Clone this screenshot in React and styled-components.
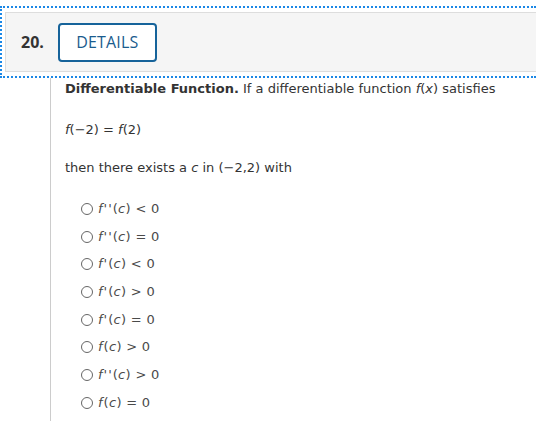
import React from 'react';
import styled, { createGlobalStyle } from 'styled-components';

const GlobalStyle = createGlobalStyle`
  html, body {
    margin: 0;
    padding: 0;
    background: #ffffff;
    overflow: hidden;
  }
  body {
    font-family: "DejaVu Sans", Verdana, sans-serif;
    color: #333333;
  }
`;

const options = [
  { fn: "f''", rel: '<' },
  { fn: "f''", rel: '=' },
  { fn: "f'", rel: '<' },
  { fn: "f'", rel: '>' },
  { fn: "f'", rel: '=' },
  { fn: 'f', rel: '>' },
  { fn: "f''", rel: '>' },
  { fn: 'f', rel: '=' },
];

export default function App() {
  return (
    <Page>
      <GlobalStyle />
      <FocusRing>
        <Header>
          <Number>20.</Number>
          <DetailsButton>DETAILS</DetailsButton>
        </Header>
      </FocusRing>
      <Body>
        <Para>
          <strong>Differentiable Function.</strong> If a differentiable function <i>f</i>(<i>x</i>) satisfies
        </Para>
        <Para $gap={23}>
          <i>f</i>(−2) = <i>f</i>(2)
        </Para>
        <Para $gap={20}>
          then there exists a <i>c</i> in (−2,2) with
        </Para>
        <Options>
          {options.map((o, i) => (
            <Option key={i}>
              <Radio type="radio" name="q20" />
              <span>
                <Fn>{o.fn}</Fn>(<i>c</i>) {o.rel} 0
              </span>
            </Option>
          ))}
        </Options>
      </Body>
    </Page>
  );
}

const Page = styled.div`
  width: 536px;
  height: 421px;
  padding-top: 6px;
  box-sizing: border-box;
`;

const FocusRing = styled.div`
  box-sizing: border-box;
  width: 100%;
  border: 2px dotted #1a87e6;
  border-right: none;
  padding: 4px 0 4px 3px;
`;

const Header = styled.div`
  display: flex;
  align-items: center;
  height: 58px;
  background: #f5f5f5;
  border: 1px solid #dddddd;
  border-right: none;
  padding-left: 15px;
  gap: 14px;
`;

const Number = styled.span`
  font-family: "Open Sans", "DejaVu Sans", sans-serif;
  font-weight: 700;
  font-size: 16px;
  color: #333333;
`;

const DetailsButton = styled.button`
  width: 99px;
  height: 39px;
  border: 2px solid #16639a;
  border-radius: 4px;
  background: #ffffff;
  color: #1a5c8e;
  font-family: "Open Sans", sans-serif;
  font-size: 16px;
  letter-spacing: 0.2px;
  padding: 0;
`;

const Body = styled.div`
  margin-left: 50px;
  border-left: 1px solid #cccccc;
  padding: 2px 0 0 14px;
  height: 360px;
  font-size: 13px;
  line-height: 18px;
`;

const Para = styled.p`
  margin: ${(p) => p.$gap || 0}px 0 0;
  color: #333333;
`;

const Options = styled.div`
  display: flex;
  flex-direction: column;
  gap: 9.7px;
  margin-top: 23px;
  padding-left: 16px;
`;

const Option = styled.label`
  display: flex;
  align-items: center;
  gap: 5px;
  color: #4a4a4a;
  height: 18px;
  letter-spacing: 0.3px;
`;

const Fn = styled.i`
  letter-spacing: 1px;
`;

const Radio = styled.input`
  appearance: none;
  width: 12px;
  height: 12px;
  margin: 0;
  border: 1px solid #666666;
  border-radius: 50%;
  background: #ffffff;
`;
